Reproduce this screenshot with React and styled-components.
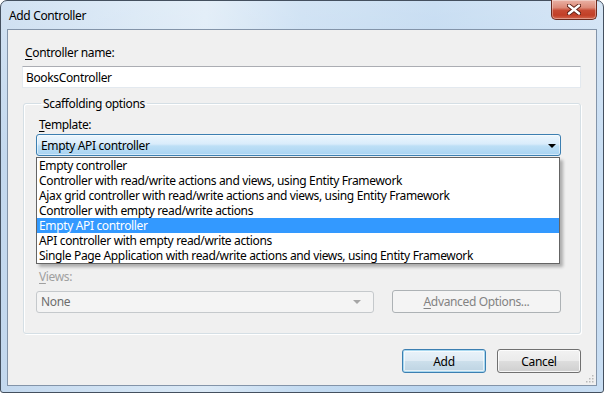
import styled, { createGlobalStyle } from 'styled-components';

const GlobalStyle = createGlobalStyle`
  html, body {
    margin: 0;
    padding: 0;
    background: #ffffff;
  }
  body {
    font-family: "Noto Sans", "Segoe UI", sans-serif;
    font-size: 12px;
    letter-spacing: -0.35px;
    color: #000;
  }
`;

const Window = styled.div`
  width: 604px;
  height: 393px;
  box-sizing: border-box;
  border: 1px solid #44505f;
  border-radius: 7px 7px 3px 3px;
  padding: 0 6px 6px;
  display: flex;
  flex-direction: column;
  background:
    linear-gradient(180deg, rgba(255, 255, 255, 0.25) 0%, rgba(255, 255, 255, 0) 40%),
    linear-gradient(90deg, #c3d8ee 0%, #d3e4f4 22%, #dbe9f6 34%, #c4dbf1 50%, #bad5ef 72%, #c9def3 100%);
`;

const TitleBar = styled.div`
  height: 28px;
  display: flex;
  justify-content: space-between;
  align-items: flex-start;
`;

const Title = styled.span`
  padding: 7px 0 0 2px;
  line-height: 15px;
`;

const CloseButton = styled.button`
  width: 46px;
  height: 20px;
  margin: -1px 0 0;
  padding: 0;
  border: 1px solid #6b2a1e;
  border-top: 0;
  border-radius: 0 0 5px 5px;
  display: flex;
  align-items: center;
  justify-content: center;
  background: linear-gradient(180deg, #eab2a5 0%, #dc8a78 40%, #c74a33 55%, #c23f27 80%, #d2664e 100%);
  box-shadow: inset 0 0 0 1px rgba(255, 255, 255, 0.35);
`;

const Client = styled.div`
  position: relative;
  flex: 1;
  border: 1px solid #8394a9;
  background: #f0f0f0;
  padding: 0 15px 0 14px;
  display: flex;
  flex-direction: column;
`;

const Label = styled.div`
  line-height: 15px;
  padding-left: ${(p) => p.$indent || 3}px;
  margin-top: ${(p) => p.$top || 0}px;
  color: ${(p) => (p.$disabled ? '#a0a0a0' : '#000')};

  u {
    text-decoration: underline;
    text-underline-offset: 2px;
  }
`;

const TextBox = styled.div`
  height: 22px;
  box-sizing: border-box;
  margin-top: 6px;
  border: 1px solid #e3e9ef;
  border-top-color: #abadb3;
  background: #fff;
  padding-left: 3px;
  display: flex;
  align-items: center;
`;

const Group = styled.fieldset`
  margin: 8px 0 0 1px;
  padding: 6px 19px 20px 12px;
  border: 1px solid #d5dfe5;
  border-radius: 3px;
  box-shadow: inset 1px 1px 0 #fff, 1px 1px 0 #fff;
  min-width: 0;

  legend {
    padding: 0 2px;
    margin-left: 5px;
    line-height: 15px;
  }
`;

const ComboWrap = styled.div`
  position: relative;
  margin-top: ${(p) => p.$top || 0}px;
  width: ${(p) => p.$width || 'auto'};
`;

const Combo = styled.div`
  height: 22px;
  box-sizing: border-box;
  border: 1px solid ${(p) => (p.$open ? '#3c7fb1' : '#c5c9cc')};
  border-radius: 3px;
  padding: 0 4px 0 4px;
  display: flex;
  align-items: center;
  justify-content: space-between;
  color: ${(p) => (p.$disabled ? '#6d6d6d' : '#000')};
  background: ${(p) =>
    p.$open
      ? 'linear-gradient(180deg, #ecf6fd 0%, #d9ecfb 45%, #bddff6 55%, #a8d3f2 100%)'
      : '#f4f4f4'};
  box-shadow: ${(p) => (p.$open ? 'inset 0 0 0 1px rgba(255,255,255,0.5)' : 'none')};
`;

const Arrow = styled.span`
  width: 0;
  height: 0;
  border-left: 4px solid transparent;
  border-right: 4px solid transparent;
  border-top: 4px solid ${(p) => (p.$disabled ? '#a6a6a6' : '#000')};
  margin-top: 1px;
  margin-right: ${(p) => (p.$disabled ? 8 : 0)}px;
`;

const DropList = styled.ul`
  position: absolute;
  top: calc(100% + 1px);
  left: 0;
  width: calc(100% - 1px);
  box-sizing: border-box;
  margin: 0;
  padding: 0;
  list-style: none;
  background: #fff;
  border: 1px solid #646464;
  box-shadow: 3px 3px 3px rgba(0, 0, 0, 0.28);
  z-index: 2;
`;

const Item = styled.li`
  height: 15px;
  line-height: 15px;
  padding-left: 2px;
  white-space: nowrap;
  overflow: hidden;
  background: ${(p) => (p.$selected ? '#3399ff' : 'transparent')};
  color: ${(p) => (p.$selected ? '#fff' : '#000')};
`;

const HiddenFields = styled.div`
  height: 113px;
`;

const Row = styled.div`
  display: flex;
  align-items: center;
  justify-content: ${(p) => p.$justify || 'flex-start'};
  gap: ${(p) => p.$gap || 0}px;
  margin-top: ${(p) => p.$top || 0}px;
`;

const Button = styled.button`
  width: ${(p) => p.$width || 84}px;
  height: ${(p) => p.$height || 24}px;
  box-sizing: border-box;
  padding: 0;
  font: inherit;
  letter-spacing: inherit;
  border-radius: 3px;
  border: 1px solid ${(p) => (p.$disabled ? '#adb2b5' : p.$default ? '#3c7fb1' : '#707070')};
  color: ${(p) => (p.$disabled ? '#838383' : '#000')};
  background: ${(p) =>
    p.$disabled
      ? '#f4f4f4'
      : p.$default
      ? 'linear-gradient(180deg, #eaf3fa 0%, #dfebf4 48%, #ccdfeb 52%, #bdd3e2 100%)'
      : 'linear-gradient(180deg, #f2f2f2 0%, #ebebeb 48%, #dddddd 52%, #cfcfcf 100%)'};
  box-shadow: ${(p) =>
    p.$disabled
      ? 'none'
      : p.$default
      ? 'inset 0 0 0 1px #a8d8f0, inset 0 0 0 2px rgba(255,255,255,0.6)'
      : 'inset 0 0 0 1px rgba(255,255,255,0.8)'};

  u {
    text-underline-offset: 2px;
  }
`;

const Grip = styled.svg`
  position: absolute;
  right: 1px;
  bottom: 1px;
`;

const templates = [
  'Empty controller',
  'Controller with read/write actions and views, using Entity Framework',
  'Ajax grid controller with read/write actions and views, using Entity Framework',
  'Controller with empty read/write actions',
  'Empty API controller',
  'API controller with empty read/write actions',
  'Single Page Application with read/write actions and views, using Entity Framework',
];

const selected = 'Empty API controller';

export default function App() {
  return (
    <>
      <GlobalStyle />
      <Window>
        <TitleBar>
          <Title>Add Controller</Title>
          <CloseButton aria-label="Close">
            <svg width="14" height="11" viewBox="0 0 14 11">
              <path d="M2 1.5 L12 9.5 M12 1.5 L2 9.5" stroke="#5a1d12" strokeWidth="4.2" strokeLinecap="round" />
              <path d="M2 1.5 L12 9.5 M12 1.5 L2 9.5" stroke="#ffffff" strokeWidth="2.4" strokeLinecap="round" />
            </svg>
          </CloseButton>
        </TitleBar>
        <Client>
          <Label $top={15}>
            <u>C</u>ontroller name:
          </Label>
          <TextBox>BooksController</TextBox>

          <Group>
            <legend>Scaffolding options</legend>
            <Label>
              <u>T</u>emplate:
            </Label>
            <ComboWrap $top={2}>
              <Combo $open>
                <span>{selected}</span>
                <Arrow />
              </Combo>
              <DropList>
                {templates.map((t) => (
                  <Item key={t} $selected={t === selected}>
                    {t}
                  </Item>
                ))}
              </DropList>
            </ComboWrap>

            <HiddenFields />

            <Label $disabled>
              <u>V</u>iews:
            </Label>
            <Row $top={6} $justify="space-between">
              <ComboWrap $width="338px">
                <Combo $disabled>
                  <span>None</span>
                  <Arrow $disabled />
                </Combo>
              </ComboWrap>
              <Button $disabled $width={169} $height={23}>
                <u>A</u>dvanced Options...
              </Button>
            </Row>
          </Group>

          <Row $top={15} $justify="flex-end" $gap={11}>
            <Button $default>Add</Button>
            <Button>Cancel</Button>
          </Row>

          <Grip width="10" height="10" viewBox="0 0 10 10">
            {[
              [8, 2],
              [8, 5],
              [5, 5],
              [8, 8],
              [5, 8],
              [2, 8],
            ].map(([x, y]) => (
              <rect key={`${x}-${y}`} x={x - 1} y={y - 1} width="1.5" height="1.5" fill="#b9b9b9" />
            ))}
          </Grip>
        </Client>
      </Window>
    </>
  );
}
